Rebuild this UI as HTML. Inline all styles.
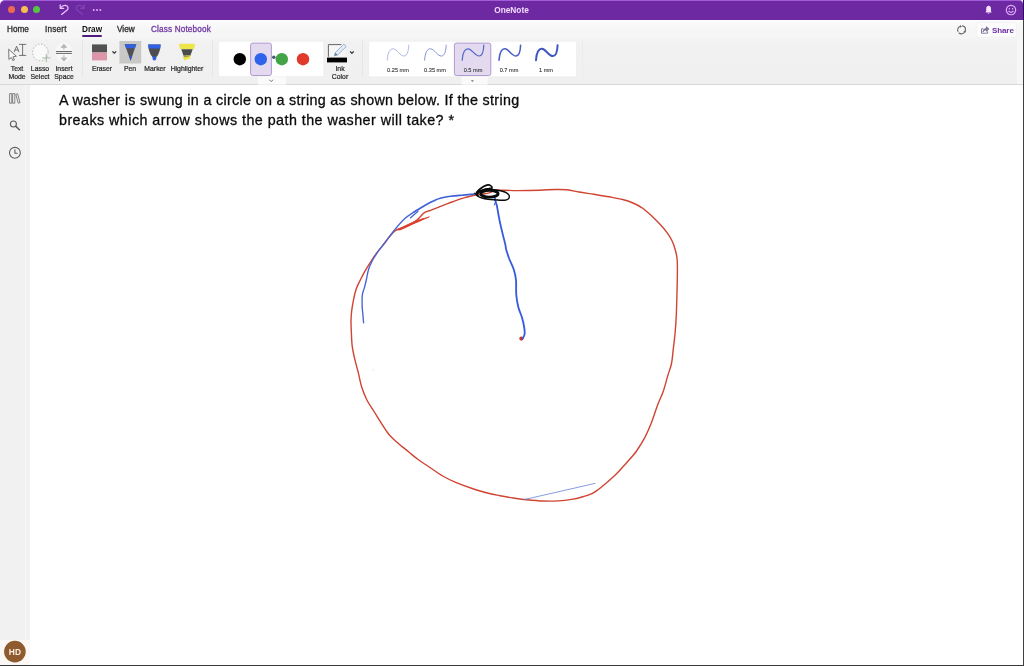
<!DOCTYPE html>
<html>
<head>
<meta charset="utf-8">
<title>OneNote</title>
<style>
*{box-sizing:border-box;margin:0;padding:0}
html,body{width:1024px;height:666px;overflow:hidden;background:#fff}
body{font-family:"Liberation Sans",sans-serif;position:relative;color:#222}
.abs{position:absolute}
#q,.lbl,.tab,.gs{will-change:transform}
#win{position:absolute;left:0;top:0;width:1023px;height:665px;background:#fff;overflow:hidden}
#edgeR{position:absolute;left:1023px;top:0;width:1px;height:666px;background:linear-gradient(#2c0c5c 0,#2c0c5c 20px,#404040 20px)}
#edgeB{position:absolute;left:0;top:665px;width:1024px;height:1px;background:#3a3a3a}
#title{position:absolute;left:0;top:0;width:1023px;height:20px;background:#6d29a2;border-top:1px solid #a25cd9;border-radius:5px 4px 0 0}
#title .t{position:absolute;left:0;width:1023px;top:4px;text-align:center;color:#f3dcff;font-weight:bold;font-size:8.3px;line-height:11px}
.tl{position:absolute;top:5.4px;width:7.1px;height:7.1px;border-radius:50%}
#tabs{position:absolute;left:0;top:20px;width:1023px;height:19.6px;background:linear-gradient(#fbfbfa 0,#f7f6f7 45%,#f5f5f5 100%);border-top:1px solid #fdfdfd}
.tab{position:absolute;top:3.5px;font-size:8.2px;line-height:10px;color:#2b2b2b;white-space:nowrap;-webkit-text-stroke:0.3px #2b2b2b}
#ribbon{position:absolute;left:0;top:39.4px;width:1023px;height:45.7px;background:linear-gradient(#f3f3f3 0,#f1f1f1 4px,#f0f0f0 100%);border-bottom:1px solid #d8d8d8}
.lbl{position:absolute;width:60px;margin-left:-30px;font-size:6.85px;line-height:7.5px;color:#2a2a2a;text-align:center;white-space:nowrap;-webkit-text-stroke:0.22px #2a2a2a}
.vsep{position:absolute;top:40px;width:1px;height:38px;background:#e6e6e6}
#side{position:absolute;left:0;top:85px;width:30px;height:580px;background:#f1f1f1}
#side .dv{position:absolute;left:24.6px;top:0;width:1.4px;height:580px;background:#f7f7f7}
#q{position:absolute;left:59px;top:90.9px;font-size:14.3px;line-height:19.5px;color:#0c0c0c;white-space:nowrap;letter-spacing:0.33px;-webkit-text-stroke:0.3px #0c0c0c}
.th{font-size:5.6px;font-weight:normal;color:#333;-webkit-text-stroke:0.1px #333}
svg{position:absolute;left:0;top:0;overflow:visible}
</style>
</head>
<body>
<div id="win">
  <!-- title bar -->
  <div id="title">
    <div class="tl" style="left:8.4px;background:#ee6a4f"></div>
    <div class="tl" style="left:20.5px;background:#f5be4f"></div>
    <div class="tl" style="left:32.7px;background:#55c644"></div>
    <div class="t gs">OneNote</div>
  </div>
  <!-- tabs -->
  <div id="tabs">
    <div class="tab" style="left:7px">Home</div>
    <div class="tab" style="left:44.6px;letter-spacing:0.2px">Insert</div>
    <div class="tab" style="left:82px;color:#111;font-weight:bold;-webkit-text-stroke:0">Draw</div>
    <div class="tab" style="left:117px">View</div>
    <div class="tab" style="left:151px;color:#7038a4;-webkit-text-stroke:0.3px #7038a4;letter-spacing:0.15px">Class Notebook</div>
    <div class="abs" style="left:81.8px;top:13.9px;width:20.4px;height:1.9px;background:#4d1c80;border-radius:1px"></div>
  </div>
  <!-- ribbon -->
  <div id="ribbon"></div>
  <div class="abs" style="left:1016.5px;top:39.4px;width:6.5px;height:44.7px;background:#f7f7f7"></div>
  <!-- ribbon items: all coordinates are page coordinates -->
  <svg width="1023" height="90" viewBox="0 0 1023 90">
    <!-- undo / redo / more -->
    <g fill="none" stroke="#ecc4fb" stroke-width="1.25" stroke-linecap="round" stroke-linejoin="round">
      <path d="M61.6 14.4 L66.9 10.3 C68.9 8.7 68.3 5.7 65.4 5.3 C63.5 5.1 61.9 6.1 60.8 7.7"/>
      <path d="M60.2 4.9 L60.2 8.3 L63.7 8.3"/>
    </g>
    <g fill="none" stroke="#8046b5" stroke-width="1.2" stroke-linecap="round" stroke-linejoin="round">
      <path d="M82.7 14.4 L77.4 10.3 C75.4 8.7 76 5.7 78.9 5.3 C80.8 5.1 82.4 6.1 83.5 7.7"/>
      <path d="M84.1 4.9 L84.1 8.3 L80.6 8.3"/>
    </g>
    <g fill="#e9bdfb"><rect x="92.9" y="9.2" width="1.65" height="1.65"/><rect x="96.2" y="9.2" width="1.65" height="1.65"/><rect x="99.5" y="9.2" width="1.65" height="1.65"/></g>
    <!-- bell -->
    <path d="M988.6 5.8 C986.9 5.8 986.2 7.2 986.2 8.8 L986.2 11.2 L985.5 12.6 L991.7 12.6 L991 11.2 L991 8.8 C991 7.2 990.3 5.8 988.6 5.8 Z M987.8 13 L989.4 13 L988.6 14 Z" fill="#f5e2ff"/>
    <!-- smiley -->
    <g fill="none" stroke="#e0b0fb" stroke-width="1.15">
      <circle cx="1011" cy="10" r="4.7"/>
      <path d="M1008.8 11.2 Q1011 13.6 1013.2 11.2" stroke-linecap="round"/>
    </g>
    <circle cx="1009.4" cy="8.8" r="0.75" fill="#e6bdf9"/><circle cx="1012.6" cy="8.8" r="0.75" fill="#e6bdf9"/>
    <!-- sync -->
    <g transform="translate(0.4 0)">
    <g fill="none" stroke="#66666e" stroke-width="1.1" stroke-linecap="round">
      <path d="M957.5 31.4 A3.9 3.9 0 0 1 960.2 26.2"/>
      <path d="M962.2 25.9 A3.9 3.9 0 0 1 964.9 30.6"/>
      <path d="M964.3 32 A3.9 3.9 0 0 1 958.6 33"/>
    </g>
    <path d="M959.6 24.9 L961.6 26.4 L959.4 27.8 Z" fill="#66666e"/>
    <path d="M965.9 30.6 L964.6 33 L963 30.9 Z" fill="#66666e"/>
    </g>
    <!-- share button -->
    <rect x="976.3" y="22.3" width="40.1" height="14.9" rx="2" fill="#fcfcfc" stroke="#ececec" stroke-width="0.6"/>
    <g fill="none" stroke="#6f6388" stroke-width="0.85" stroke-linejoin="round" stroke-linecap="round">
      <path d="M983.2 28.8 L981.5 28.8 L981.5 33.2 L987.6 33.2 L987.6 31.8"/>
      <path d="M983.2 31.4 C983.6 29.2 984.9 28.3 986.5 28.3 L986.5 26.8 L988.9 29 L986.5 31.2 L986.5 29.9 C985.2 29.9 984.1 30.3 983.2 31.4 Z" fill="#8d83a6"/>
    </g>

    <!-- Text Mode icon -->
    <g fill="none" stroke="#5e5e5e" stroke-width="0.85" stroke-linejoin="round" stroke-linecap="round">
      <path d="M8.7 49.6 L8.9 59.4 L11.3 57.5 L12.9 60.6 L14.4 59.9 L12.9 56.9 L16 56.3 Z" fill="#f8f8f8"/>
      <path d="M14.3 51.7 L16.6 46.2 L18.9 51.7 M15.1 50 L18.1 50"/>
      <path d="M19.4 44.4 L25.8 44.4 M22.6 44.4 L22.6 55.4 M19.4 55.4 L25.8 55.4"/>
    </g>
    <!-- Lasso icon -->
    <ellipse cx="40.4" cy="52.4" rx="7.7" ry="8.4" fill="#f9f9f9" stroke="#a6aea6" stroke-width="0.9" stroke-dasharray="1.5 1.7"/>
    <path d="M42.2 57.9 L50.4 57.9 M46.3 53.8 L46.3 62.2" stroke="#9bb09b" stroke-width="0.85" fill="none"/>
    <!-- Insert Space icon -->
    <ellipse cx="63.9" cy="52.4" rx="8.4" ry="10.4" fill="#f7f7f7"/>
    <g stroke="#b7b7b7" stroke-width="1" fill="#b7b7b7" stroke-linejoin="round"><path d="M63.9 45.4 L63.9 49.8 M63.9 55.2 L63.9 60" fill="none"/><path d="M61.2 47.4 L63.9 44.3 L66.6 47.4 Z"/><path d="M61.2 58 L63.9 61.1 L66.6 58 Z"/></g>
    <g stroke="#5a5a5a" stroke-width="0.9" fill="none"><path d="M56 51.5 L71.9 51.5 M56 53.4 L71.9 53.4"/></g>
    <!-- Eraser -->
    <rect x="92" y="44.4" width="15" height="8.1" fill="#535052"/>
    <rect x="92" y="52.5" width="15" height="7.9" fill="#dc95a9"/>
    <path d="M112.8 51.7 L114.3 53.2 L115.8 51.7" fill="none" stroke="#3c3c3c" stroke-width="1.25" stroke-linecap="round" stroke-linejoin="round"/>
    <!-- Pen (selected) -->
    <rect x="119.4" y="41" width="21.8" height="22.5" fill="#c8c8c6"/>
    <path d="M124.7 44.2 L136.3 44.2 L130.6 60.8 Z" fill="#505052"/>
    <path d="M124.7 44.2 L136.3 44.2 L134.9 48.3 L126.1 48.3 Z" fill="#3060e2"/>
    <path d="M128.9 55.8 L132.3 55.8 L130.6 60.8 Z" fill="#3b52c4"/>
    <!-- Marker -->
    <path d="M148.2 44.4 L160.6 44.4 C160.4 50 158.6 54.6 156.4 57 L152.4 57 C150.2 54.6 148.4 50 148.2 44.4 Z" fill="#4e4e50"/>
    <path d="M148.2 44.4 L160.6 44.4 L160.2 48.4 L148.6 48.4 Z" fill="#2f62e6"/>
    <path d="M152.4 56.6 L156.4 56.6 C156.6 59 155.8 60.6 154.4 60.6 C153 60.6 152.2 59 152.4 56.6 Z" fill="#2f5fe0"/>
    <!-- Highlighter -->
    <path d="M179.5 43.8 H194.5 Q195 43.8 194.9 44.4 L194.4 48 Q194.1 49.3 192.6 49.3 H181.4 Q179.9 49.3 179.6 48 L179.1 44.4 Q179 43.8 179.5 43.8 Z" fill="#eee548"/>
    <path d="M181.3 49.3 L192.7 49.3 L190.3 55.7 L183.5 55.7 Z" fill="#4b4b4d"/>
    <path d="M183.5 56 L190.3 55 L190.2 58.4 L183.9 60.5 Z" fill="#eee548"/>
    <path d="M183.5 56.6 L190.3 55.2 L190.3 56 L183.6 57.6 Z" fill="#8a8650"/>

    <!-- colour gallery -->
    <rect x="218.6" y="41.2" width="105.2" height="35.2" fill="#ffffff" stroke="#ebebeb" stroke-width="0.6"/>
    <rect x="258" y="76.4" width="28" height="8.2" fill="#fafafa"/>
    <rect x="250.6" y="43.1" width="20.8" height="32.4" rx="2" fill="#e3daf0" stroke="#a892c9" stroke-width="0.9"/>
    <circle cx="239.8" cy="59.2" r="6.2" fill="#000"/>
    <circle cx="260.8" cy="59.2" r="6.2" fill="#2e63ea"/>
    <circle cx="273.8" cy="57.2" r="1.75" fill="#4a5870"/>
    <circle cx="281.8" cy="59.2" r="6.2" fill="#42a446"/>
    <circle cx="303" cy="59.2" r="6.2" fill="#e03a2c"/>
    <path d="M269.6 80 L271.2 81.6 L272.8 80" fill="none" stroke="#666" stroke-width="0.9" stroke-linecap="round" stroke-linejoin="round"/>
    <!-- ink colour -->
    <rect x="328.4" y="44.6" width="16.4" height="12" fill="#f6f6f6"/>
    <path d="M328.4 56.8 L328.4 44.6 L341.4 44.6" fill="none" stroke="#5e5e5e" stroke-width="0.95"/>
    <path d="M334.4 55.8 L335.3 52.6 L343.8 44.2 L346.3 46.5 L337.6 55 Z" fill="#e3edf9" stroke="#8a9ec2" stroke-width="0.8" stroke-linejoin="round"/>
    <path d="M334.4 55.8 L335.3 52.6 L337.6 55 Z" fill="#6c7f9e"/>
    <rect x="327" y="57.6" width="20" height="4.8" fill="#000"/>
    <path d="M350.4 51.8 L351.9 53.3 L353.4 51.8" fill="none" stroke="#3c3c3c" stroke-width="1.25" stroke-linecap="round" stroke-linejoin="round"/>

    <!-- thickness gallery -->
    <rect x="368.8" y="41.2" width="207.6" height="35.6" fill="#ffffff" stroke="#ebebeb" stroke-width="0.6"/>
    <rect x="461.6" y="76.8" width="26" height="7.8" fill="#fafafa"/>
    <rect x="454.4" y="43.1" width="36.4" height="32.4" rx="2" fill="#e3daf0" stroke="#a892c9" stroke-width="0.9"/>
    <g fill="none" stroke-linecap="round">
      <path d="M387.2 60.2 C387.7 52 390.2 48.5 393.2 48.8 C397.2 49.3 400.2 56.3 404.2 56 C407.5 55.8 408.6 50 408.8 45.2" stroke="#8d9cd8" stroke-width="0.7"/>
      <path d="M424.6 60.2 C425.1 52 427.6 48.5 430.6 48.8 C434.6 49.3 437.6 56.3 441.6 56 C444.9 55.8 446.0 50 446.2 45.2" stroke="#7585d0" stroke-width="0.9"/>
      <path d="M462.2 60.2 C462.7 52 465.2 48.5 468.2 48.8 C472.2 49.3 475.2 56.3 479.2 56 C482.5 55.8 483.6 50 483.8 45.2" stroke="#5466c4" stroke-width="1.2"/>
      <path d="M499.0 60.2 C499.5 52 502.0 48.5 505.0 48.8 C509.0 49.3 512.0 56.3 516.0 56 C519.3 55.8 520.4 50 520.6 45.2" stroke="#4a5ec4" stroke-width="1.55"/>
      <path d="M536.0 60.2 C536.5 52 539.0 48.5 542.0 48.8 C546.0 49.3 549.0 56.3 553.0 56 C556.3 55.8 557.4 50 557.6 45.2" stroke="#4257c0" stroke-width="2.0"/>
    </g>
    <path d="M470.8 80.2 L474 80.2 L472.4 82 Z" fill="#777"/>
  </svg>
  <div class="vsep" style="left:82px"></div>
  <div class="vsep" style="left:212px"></div>
  <div class="vsep" style="left:362px"></div>
  <div class="vsep" style="left:581.6px;background:#ebebeb"></div>
  <div class="abs gs" style="left:992.4px;top:24.5px;font-size:8px;line-height:11px;font-weight:bold;color:#6b2fa2;letter-spacing:-0.1px">Share</div>
  <div class="lbl" style="left:16.6px;top:65.1px">Text<br>Mode</div>
  <div class="lbl" style="left:40.4px;top:65.1px">Lasso<br>Select</div>
  <div class="lbl" style="left:64px;top:65.1px">Insert<br>Space</div>
  <div class="lbl" style="left:102.2px;top:65.1px">Eraser</div>
  <div class="lbl" style="left:130.2px;top:65.1px">Pen</div>
  <div class="lbl" style="left:154.6px;top:65.1px">Marker</div>
  <div class="lbl" style="left:186.6px;top:65.1px">Highlighter</div>
  <div class="lbl" style="left:340px;top:65.1px">Ink<br>Color</div>
  <div class="lbl th" style="left:397.6px;top:66.6px">0.25 mm</div>
  <div class="lbl th" style="left:435px;top:66.6px">0.35 mm</div>
  <div class="lbl th" style="left:472.6px;top:66.6px">0.5 mm</div>
  <div class="lbl th" style="left:509.4px;top:66.6px">0.7 mm</div>
  <div class="lbl th" style="left:546.4px;top:66.6px">1 mm</div>
  <div id="side"><div class="dv"></div></div>
  <!-- sidebar icons + avatar + ink -->
  <svg width="1023" height="665" viewBox="0 0 1023 665">
    <!-- notebooks icon -->
    <g fill="none" stroke="#707070" stroke-width="0.85" stroke-linejoin="round">
      <rect x="9.6" y="93.6" width="2.2" height="9.6"/>
      <rect x="12.6" y="93.6" width="2.2" height="9.6"/>
      <path d="M15.8 94.4 L17.6 93.8 L20 102.6 L18.2 103.2 Z"/>
    </g>
    <!-- search -->
    <g fill="none" stroke="#5e5e5e" stroke-linecap="round">
      <circle cx="13.4" cy="124" r="3" stroke-width="1.1"/>
      <path d="M15.9 126.4 L19.4 129.8" stroke-width="1.5"/>
    </g>
    <!-- clock -->
    <g fill="none" stroke="#5e5e5e" stroke-width="1.1" stroke-linecap="round" stroke-linejoin="round">
      <circle cx="14.9" cy="152.8" r="5.4"/>
      <path d="M14.9 149.8 L14.9 153.2 L17.2 153.2"/>
    </g>
    <!-- avatar -->
    <rect x="0" y="640" width="30" height="25" fill="#fbf8f5"/>
    <circle cx="14.9" cy="651.6" r="10.8" fill="#8f5a2e"/>

    <!--INK-->
    <path fill="none" stroke="#cf4432" stroke-width="1.4" stroke-linecap="round" stroke-linejoin="round" d="M474.3 195.2 C472.7 195.6 467.8 196.8 464.8 197.6 C461.9 198.4 459.3 199.4 456.6 200.3 C453.9 201.2 451.4 202.2 448.4 203.3 C445.4 204.4 441.8 205.9 438.8 207.1 C435.8 208.3 433.0 209.4 430.6 210.3 C428.2 211.2 426.0 211.7 424.4 212.6 C422.8 213.5 422.2 214.8 421.0 216.0 C419.8 217.2 418.8 218.7 417.0 220.1 C415.2 221.5 412.3 223.1 410.0 224.3 C407.7 225.6 405.3 226.7 403.0 227.6 C400.7 228.5 398.4 228.7 396.3 230.0 C394.2 231.3 392.9 232.7 390.7 235.3 C388.4 237.9 385.2 242.3 382.8 245.4 C380.4 248.5 378.1 251.1 376.0 253.9 C373.9 256.7 372.3 259.4 370.4 262.3 C368.5 265.2 366.5 268.4 364.8 271.3 C363.1 274.2 361.7 277.1 360.3 280.0 C358.9 282.9 357.3 285.7 356.2 289.0 C355.1 292.3 354.2 296.2 353.5 299.8 C352.8 303.4 352.1 307.2 351.7 310.6 C351.3 314.1 351.1 317.2 351.0 320.5 C350.9 323.8 351.1 326.2 351.3 330.5 C351.5 334.8 351.6 341.3 352.2 346.2 C352.8 351.1 353.9 355.2 354.9 359.7 C355.9 364.2 357.3 368.7 358.4 373.2 C359.5 377.7 360.2 382.3 361.6 386.8 C363.0 391.3 365.0 396.3 367.0 400.3 C369.0 404.3 371.6 407.4 373.8 411.0 C376.1 414.6 378.0 418.1 380.5 421.9 C383.0 425.7 385.7 430.4 388.6 434.0 C391.5 437.6 395.3 440.7 398.1 443.3 C400.9 445.9 403.4 447.5 405.6 449.4 C407.9 451.2 409.4 452.6 411.6 454.4 C413.8 456.2 415.9 457.9 418.8 460.0 C421.7 462.1 425.2 464.3 429.2 467.0 C433.2 469.7 438.2 473.4 442.7 476.0 C447.2 478.6 450.8 480.4 456.2 482.7 C461.6 484.9 469.2 487.6 475.1 489.5 C481.0 491.4 487.2 493.0 491.4 494.0 C495.5 495.0 496.4 495.0 500.0 495.7 C503.6 496.4 508.9 497.3 513.3 498.0 C517.7 498.7 521.6 499.2 526.6 499.7 C531.6 500.2 538.0 500.8 543.2 501.0 C548.5 501.2 553.4 501.2 558.1 500.9 C562.8 500.6 567.2 500.1 571.4 499.4 C575.5 498.7 579.7 497.6 583.0 496.7 C586.3 495.8 588.9 495.1 591.4 493.9 C593.9 492.7 595.5 491.5 598.0 489.7 C600.5 487.9 603.2 485.6 606.3 483.0 C609.3 480.4 613.0 477.3 616.3 474.0 C619.6 470.7 622.9 466.9 626.2 463.2 C629.5 459.4 633.2 455.7 636.2 451.5 C639.2 447.3 642.0 442.9 644.5 438.2 C647.0 433.5 649.0 428.8 651.2 423.3 C653.4 417.8 655.6 410.3 657.6 405.0 C659.6 399.7 661.5 396.5 663.2 391.6 C664.9 386.8 666.3 380.6 667.7 375.9 C669.1 371.2 670.6 368.0 671.5 363.5 C672.4 359.0 672.7 353.9 673.3 348.8 C673.9 343.7 674.6 338.6 675.1 333.0 C675.6 327.4 676.0 321.8 676.3 315.0 C676.6 308.2 676.8 300.0 677.0 292.5 C677.2 285.0 677.4 275.8 677.4 270.0 C677.4 264.2 677.4 261.5 677.0 258.0 C676.6 254.5 675.8 251.9 675.0 249.0 C674.2 246.1 673.2 243.4 672.0 240.8 C670.8 238.2 669.6 236.1 667.6 233.3 C665.6 230.6 662.8 227.3 660.0 224.3 C657.2 221.3 654.0 218.1 651.0 215.3 C648.0 212.6 645.0 209.9 642.0 207.8 C639.0 205.8 636.2 204.4 633.0 203.0 C629.8 201.6 626.6 200.5 622.6 199.5 C618.6 198.5 613.8 197.7 609.0 196.8 C604.2 195.9 599.0 195.1 594.0 194.3 C589.0 193.5 583.5 192.8 579.0 192.0 C574.5 191.2 571.0 190.2 567.0 189.8 C563.0 189.4 559.5 189.4 555.0 189.5 C550.5 189.6 546.2 190.0 540.0 190.2 C533.8 190.4 524.7 190.6 518.0 190.6 C511.3 190.6 503.8 190.2 500.0 190.1 C496.2 190.0 496.9 189.8 495.2 190.2 C493.5 190.6 492.0 192.0 490.0 192.6 C488.0 193.2 485.6 193.6 483.0 194.0 C480.4 194.4 475.8 195.0 474.3 195.2"/>
    <path fill="#d8432f" stroke="#d8432f" stroke-width="0.8" stroke-linejoin="round" d="M396.6 230 L403 226.8 L410 223.6 L417.4 220.6 L429.4 216.8 L421 220.6 L412 224.4 L405.5 227.6 L400 230 Z"/>
    <path fill="none" stroke="#d8432f" stroke-width="1.3" stroke-linecap="round" d="M399 229.4 L412.5 223.6 M406 226.4 L423 218.8"/>
    <path fill="none" stroke="#3f60d8" stroke-width="1.65" stroke-linecap="round" stroke-linejoin="round" d="M474.3 194.1 C472.2 194.3 465.9 194.8 462.0 195.2 C458.1 195.5 454.6 195.7 451.0 196.2 C447.4 196.7 443.6 197.2 440.2 198.2 C436.8 199.2 433.8 200.7 430.6 202.3 C427.4 203.9 423.7 206.2 421.0 207.8 C418.3 209.4 415.3 211.2 414.2 211.9"/>
    <path fill="none" stroke="#4664d6" stroke-width="1.35" stroke-linecap="round" stroke-linejoin="round" d="M414.2 211.9 C412.6 213.0 408.0 215.6 404.6 218.8 C401.2 221.9 396.9 227.1 393.7 231.0 C390.5 234.9 387.8 239.0 385.5 242.0 C383.2 245.0 381.6 246.7 380.0 248.8 C378.4 250.9 377.2 252.7 376.0 254.6 C374.8 256.5 373.9 257.6 372.7 260.0 C371.5 262.4 369.8 265.7 368.7 269.0 C367.6 272.3 367.0 276.8 366.3 280.0 C365.6 283.2 365.0 285.6 364.3 288.1 C363.6 290.7 362.6 292.2 362.3 295.3 C362.0 298.4 362.1 303.6 362.2 307.0 C362.4 310.4 362.8 313.4 363.0 316.0 C363.2 318.6 363.5 321.7 363.6 322.8"/>
    <path fill="none" stroke="#3f60d8" stroke-width="1.25" stroke-linecap="round" d="M418.0 211.2 C416.8 212.3 411.8 216.7 410.6 217.8"/>
    <circle cx="521.4" cy="338.6" r="2.1" fill="#c43a2c"/>
    <path fill="none" stroke="#3a5cdc" stroke-width="1.85" stroke-linecap="round" stroke-linejoin="round" d="M494.8 198.0 C495.0 198.8 495.6 201.6 496.0 203.0 C496.4 204.4 496.4 203.6 497.0 206.4 C497.6 209.2 498.5 215.2 499.4 219.6 C500.3 224.0 501.4 228.7 502.4 232.9 C503.4 237.1 504.8 242.1 505.4 244.9 C506.0 247.8 505.6 247.7 506.3 250.0 C507.0 252.3 508.1 255.8 509.3 259.0 C510.6 262.2 512.7 266.0 513.8 269.5 C514.9 273.0 515.6 275.8 516.0 280.0 C516.4 284.2 515.9 290.5 516.3 295.0 C516.7 299.5 517.3 303.2 518.3 307.0 C519.2 310.8 521.0 314.1 522.0 317.6 C523.0 321.1 523.9 325.3 524.3 328.0 C524.7 330.7 524.9 332.3 524.6 334.0 C524.4 335.7 523.1 337.7 522.8 338.4"/>
    <path fill="none" stroke="#3a5cdc" stroke-width="1" stroke-linecap="round" d="M494.3 205 L495.6 201.6"/>
    <path d="M523.3 499.8 L595 483.4" fill="none" stroke="#5f7bd2" stroke-width="0.75" stroke-linecap="round"/>
    <path fill="none" stroke="#0a0a0a" stroke-width="1.4" stroke-linecap="round" stroke-linejoin="round" d="M474.8 193.2 C475.2 193.7 476.3 195.2 477.5 196.0 C478.7 196.8 480.2 197.5 482.0 198.0 C483.8 198.5 486.0 198.9 488.0 199.2 C490.0 199.5 491.2 199.6 494.0 199.8 C496.8 200.0 502.4 200.4 504.8 200.3 C507.2 200.2 507.4 199.6 508.2 199.0 C509.0 198.4 509.4 197.4 509.4 196.6 C509.4 195.8 508.8 194.8 508.0 194.0 C507.2 193.2 506.5 192.6 504.8 192.0 C503.1 191.4 499.8 190.6 497.6 190.2 C495.4 189.8 493.7 189.5 491.6 189.5 C489.5 189.5 486.1 189.9 485.0 190.0"/>
    <path fill="none" stroke="#0a0a0a" stroke-width="1.7" stroke-linecap="round" stroke-linejoin="round" d="M476.6 192.4 C477.2 191.8 478.8 190.0 480.0 189.0 C481.2 188.0 482.7 186.9 484.0 186.2 C485.3 185.5 486.9 184.9 488.0 184.8 C489.1 184.7 489.9 185.1 490.6 185.6 C491.3 186.1 492.3 187.5 492.0 188.0 C491.7 188.5 490.3 188.3 489.0 188.6 C487.7 188.9 485.6 189.1 484.0 189.6 C482.4 190.1 480.8 190.7 479.5 191.4 C478.2 192.1 476.6 192.9 476.4 193.6 C476.1 194.3 477.7 195.4 478.0 195.8"/>
    <ellipse cx="489.4" cy="193.7" rx="8.6" ry="3.4" fill="none" stroke="#0a0a0a" stroke-width="2.9"/>
    <path fill="none" stroke="#0a0a0a" stroke-width="1.6" stroke-linecap="round" d="M477 194.6 C479 191 484 189.4 489 189.6"/>
    <circle cx="373" cy="370" r="0.6" fill="#d2d2d2"/>
    <!--/INK-->
  </svg>
  <div class="abs gs" style="left:0;top:647.1px;width:29.8px;text-align:center;font-size:8.4px;line-height:11px;font-weight:bold;color:#fdeee0">HD</div>
  <div id="q"><span id="l1">A washer is swung in a circle on a string as shown below. If the string</span><br><span id="l2" style="letter-spacing:0.455px">breaks which arrow shows the path the washer will take? *</span></div>
</div>
<div id="edgeR"></div>
<div id="edgeB"></div>
</body>
</html>
